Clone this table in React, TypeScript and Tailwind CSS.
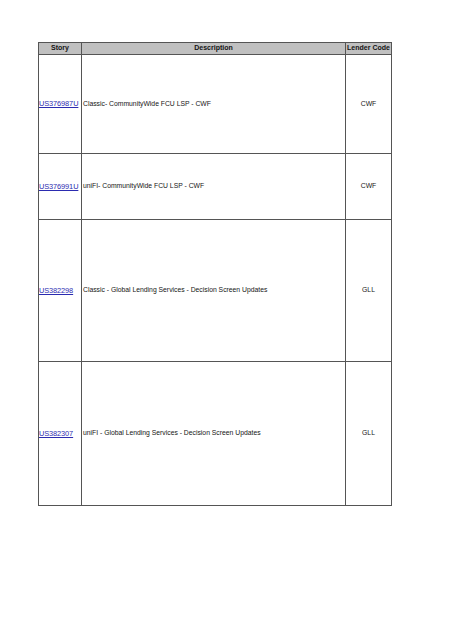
import React from 'react';

interface Row {
  story: string;
  description: string;
  lender: string;
  height: string;
}

const rows: Row[] = [
  { story: 'US376987U', description: 'Classic- CommunityWide FCU LSP - CWF', lender: 'CWF', height: 'h-[99px]' },
  { story: 'US376991U', description: 'uniFI- CommunityWide FCU LSP - CWF', lender: 'CWF', height: 'h-[66px]' },
  { story: 'US382298', description: 'Classic - Global Lending Services - Decision Screen Updates', lender: 'GLL', height: 'h-[142px]' },
  { story: 'US382307', description: 'uniFI - Global Lending Services - Decision Screen Updates', lender: 'GLL', height: 'h-[143px]' },
];

const App: React.FC = () => {
  return (
    <div className="w-[474px] h-[632px] bg-white pt-[42px] pl-[38px] font-['Liberation_Sans',Arial,sans-serif] text-[6.8px] text-[#151515]">
      <div className="w-[354px] border border-[#555]">
        {/* header */}
        <div className="grid grid-cols-[43px_264px_45px] h-[12px] bg-[#c0c0c0] border-b border-[#555] font-bold text-[7px]">
          <div className="flex items-center justify-center border-r border-[#555]">Story</div>
          <div className="flex items-center justify-center border-r border-[#555]">Description</div>
          <div className="flex items-center justify-center">Lender Code</div>
        </div>

        {rows.map((row, i) => (
          <div
            key={row.story}
            className={`grid grid-cols-[43px_264px_45px] ${row.height} ${i < rows.length - 1 ? 'border-b border-[#555]' : ''}`}
          >
            <div className="flex items-center overflow-hidden whitespace-nowrap border-r border-[#555]">
              <span className="text-[#2b2bb0] underline text-[7.4px] tracking-[-0.1px]">{row.story}</span>
            </div>
            <div className="flex items-center whitespace-nowrap border-r border-[#555] pl-px">
              {row.description}
            </div>
            <div className="flex items-center justify-center">{row.lender}</div>
          </div>
        ))}
      </div>
    </div>
  );
};

export default App;
